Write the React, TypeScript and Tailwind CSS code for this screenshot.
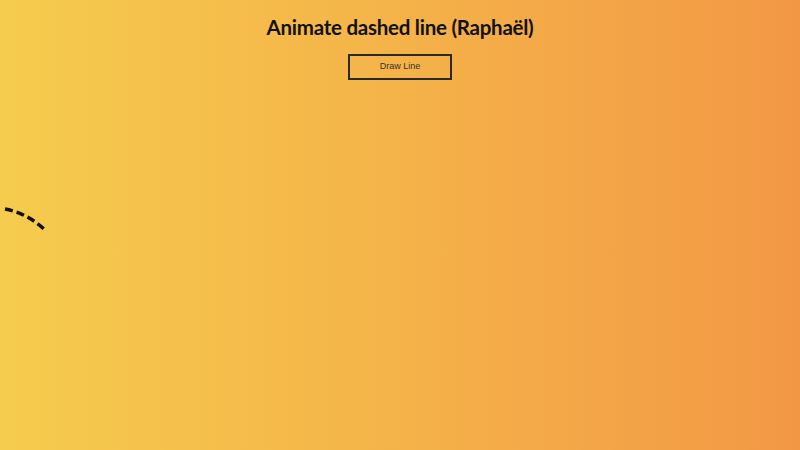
import React from "react";

export default function App() {
  return (
    <div className="relative w-[800px] h-[450px] overflow-hidden bg-gradient-to-r from-[#f5cc4d] to-[#f29845]">
      <div className="flex flex-col items-center pt-[13px]">
        <h1 className="text-[20.5px] leading-[28px] tracking-[-0.25px] font-bold text-[#111] [font-family:Lato,'Open_Sans',sans-serif]">
          Animate dashed line (Raphaël)
        </h1>
        <button className="mt-[13px] w-[104px] h-[26px] border-2 border-[#2a2a2a] text-[9px] text-[#333] [font-family:'Liberation_Sans',Arial,sans-serif] bg-transparent">
          Draw Line
        </button>
      </div>
      <svg className="absolute left-0 top-0" width="800" height="450">
        <path
          d="M5 209 Q 27 213 45 230"
          fill="none"
          stroke="#111"
          strokeWidth="3.5"
          strokeDasharray="8 4"
        />
      </svg>
    </div>
  );
}
